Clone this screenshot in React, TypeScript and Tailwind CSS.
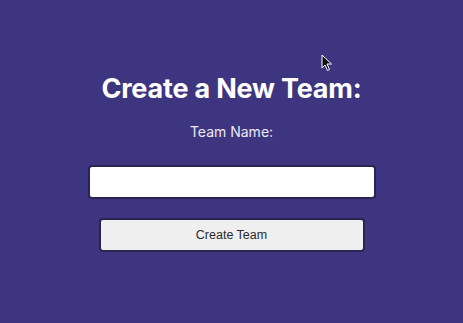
import React from "react";

export default function App() {
  return (
    <div
      className="relative w-full h-[323px] bg-[#3e3580] flex flex-col items-center overflow-hidden"
      style={{ fontFamily: "Inter, 'Liberation Sans', sans-serif" }}
    >
      <h1 className="mt-[72px] text-[27px] leading-[34px] font-bold text-white tracking-[-0.2px]">
        Create a New Team:
      </h1>
      <label className="mt-[17px] text-[14px] leading-[18px] text-[#ecebf5]">Team Name:</label>
      <input
        type="text"
        className="mt-[24px] w-[288px] h-[34px] bg-white rounded-[4px] border-2 border-[#2a2550] outline-none"
      />
      <button
        className="mt-[19px] w-[266px] h-[34px] bg-[#efefef] rounded-[4px] border-2 border-[#2a2550] text-[12.5px] text-[#2a2a2a]"
        style={{ fontFamily: "'Liberation Sans', Arial, sans-serif" }}
      >
        Create Team
      </button>
      <svg
        className="absolute left-[321px] top-[54px]"
        width="12"
        height="18"
        viewBox="0 0 12 18"
      >
        <path d="M1 1 L1 14 L4 11 L6.5 16.5 L8.5 15.5 L6 10 L10.5 10 Z" fill="#111" stroke="#fff" strokeWidth="1" />
      </svg>
    </div>
  );
}
